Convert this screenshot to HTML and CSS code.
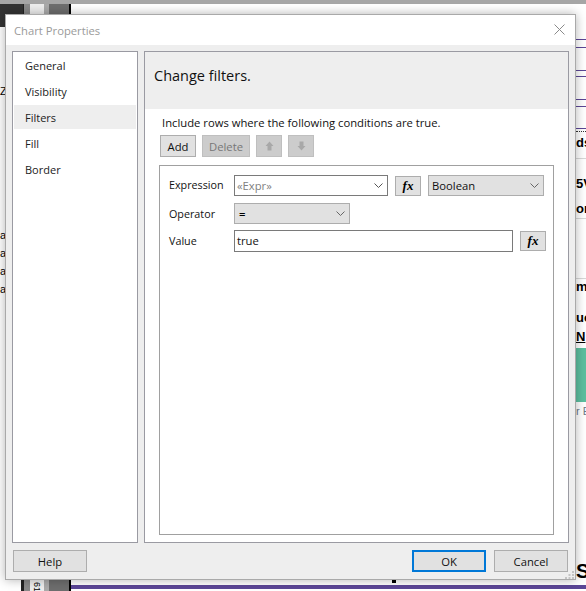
FILE: index.html
```html
<!DOCTYPE html>
<html lang="en">
<head>
<meta charset="utf-8">
<title>Chart Properties</title>
<link rel="stylesheet" href="styles.css">
</head>
<body>
<div class="backdrop">
  <div class="topbar"></div>
  <div class="tabstrip"></div>
  <div class="tab t1"></div>
  <div class="bottombar"></div>
  <div class="leftbar"><span class="vtext">61</span></div>
  <div class="speck"></div>
  <div class="ltext z">Z</div>
  <div class="ltext a1">a</div><div class="ltext a2">a</div><div class="ltext a3">a</div><div class="ltext a4">a</div>
  <div class="rule r1"></div><div class="rule r2"></div><div class="rule r3"></div><div class="rule r4"></div><div class="rule r5"></div><div class="rule r6"></div><div class="rule r7"></div>
  <div class="dots"></div>
  <div class="rule lite l1"></div><div class="rule lite l2"></div><div class="rule lite l3"></div>
  <div class="rtext x1">ds</div><div class="rtext x2">5V</div><div class="rtext x3">or</div><div class="rtext x4">m</div><div class="rtext x5">ue</div><div class="rtext x6"><u>N</u></div>
  <div class="teal"></div>
  <div class="rtext x7">r E</div>
  <div class="rtext x8">S</div>
</div>

<div class="dialog">
  <header class="titlebar">
    <span class="title">Chart Properties</span>
    <svg class="close" width="11" height="11" viewBox="0 0 11 11"><path d="M.5.5l10 10M10.500.5l-10 10" stroke="#8a8a8a" stroke-width="1" fill="none"/></svg>
  </header>
  <div class="body">
    <nav class="nav">
      <div class="nav-item">General</div>
      <div class="nav-item">Visibility</div>
      <div class="nav-item active">Filters</div>
      <div class="nav-item">Fill</div>
      <div class="nav-item">Border</div>
    </nav>
    <main class="panel">
      <div class="heading">Change filters.</div>
      <div class="content">
        <p class="intro">Include rows where the following conditions are true.</p>
        <div class="toolbar">
          <button class="btn add">Add</button>
          <button class="btn disabled del">Delete</button>
          <button class="btn disabled arrow"><svg width="9" height="10" viewBox="0 0 9 10"><path d="M4.500.5L8.500 5H6.500v4.500h-4V5H.5z" fill="#a8a8a8"/></svg></button>
          <button class="btn disabled arrow"><svg width="9" height="10" viewBox="0 0 9 10"><path d="M4.500 9.500L8.500 5H6.500V.5h-4V5H.5z" fill="#a8a8a8"/></svg></button>
        </div>
        <div class="filter">
          <div class="row row1">
            <label class="lbl">Expression</label>
            <div class="combo expr"><span class="ph">«Expr»</span><svg class="chev" width="9" height="5" viewBox="0 0 9 5"><path d="M.5.5l4 4 4-4" stroke="#555" fill="none"/></svg></div>
            <button class="fx"><i>fx</i></button>
            <div class="combo gray type"><span>Boolean</span><svg class="chev" width="9" height="5" viewBox="0 0 9 5"><path d="M.5.5l4 4 4-4" stroke="#666" fill="none"/></svg></div>
          </div>
          <div class="row row2">
            <label class="lbl">Operator</label>
            <div class="combo gray op"><span class="eq">=</span><svg class="chev" width="9" height="5" viewBox="0 0 9 5"><path d="M.5.5l4 4 4-4" stroke="#666" fill="none"/></svg></div>
          </div>
          <div class="row row3">
            <label class="lbl">Value</label>
            <div class="input">true</div>
            <button class="fx"><i>fx</i></button>
          </div>
        </div>
      </div>
    </main>
  </div>
  <footer class="footer">
    <button class="btn big">Help</button>
    <span class="spacer"></span>
    <button class="btn big ok">OK</button>
    <button class="btn big">Cancel</button>
    <svg class="grip" width="10" height="8" viewBox="0 0 10 8"><path d="M7 0h2v2H7zM3.500 3h2v2h-2zM7 3h2v2H7zM0 6h2v2H0zM3.500 6h2v2h-2zM7 6h2v2H7z" fill="#c4c4c4"/></svg>
  </footer>
</div>
</body>
</html>
```
FILE: styles.css
```css
* { box-sizing: border-box; }
html, body { margin: 0; padding: 0; }
body {
  width: 586px; height: 591px; overflow: hidden; position: relative;
  background: #fff;
  font-family: "Open Sans", "Noto Sans", "Liberation Sans", sans-serif;
  font-size: 11.25px; color: #111;
}
.backdrop { position: absolute; inset: 0; overflow: hidden; }
.topbar { position: absolute; left: 0; top: 0; width: 586px; height: 4px; background: #a6a6a6; }
.tabstrip { position: absolute; left: 21px; top: 4px; width: 50px; height: 11px; background: linear-gradient(90deg, #222 0 6%, #8a8a8a 6% 18%, #eee 18% 46%, #aaa 46% 56%, #6e6e6e 56% 96%, #000 96%); }
.tab { position: absolute; top: 4px; }
.t1 { left: 0; width: 23px; height: 23px; background: #333; }
.bottombar { position: absolute; left: 71px; top: 585px; width: 515px; height: 4px; background: #5b4696; }
.leftbar { position: absolute; left: 21px; top: 579px; width: 50px; height: 12px; overflow: hidden; background: linear-gradient(90deg, #222 0 6%, #8a8a8a 6% 18%, #eee 18% 46%, #aaa 46% 56%, #6e6e6e 56% 96%, #000 96%); }
.vtext { position: absolute; left: 11px; top: 3px; font-family: "Liberation Sans", sans-serif; font-size: 9px; line-height: 10px; color: #000; transform: rotate(90deg); }
.speck { position: absolute; left: 392px; top: 579px; width: 4px; height: 4px; background: #000; }
.ltext, .rtext { position: absolute; font-family: "Liberation Sans", sans-serif; color: #000; line-height: 12px; white-space: nowrap; }
.ltext { left: 0; font-size: 11px; }
.z { top: 85px; } .a1 { top: 229px; } .a2 { top: 247px; } .a3 { top: 265px; } .a4 { top: 283px; }
.rule { position: absolute; left: 576px; width: 10px; height: 1px; background: #5b4696; }
.r1 { top: 39px; } .r2 { top: 47px; } .r3 { top: 70px; } .r4 { top: 76px; } .r5 { top: 99px; } .r6 { top: 106px; } .r7 { top: 128px; }
.lite { background: #d8d8d8; }
.l1 { top: 158px; } .l2 { top: 218px; } .l3 { top: 278px; }
.dots { position: absolute; left: 576px; top: 131px; width: 10px; height: 1px; border-top: 1px dotted #333; }
.rtext { left: 576px; font-size: 13px; font-weight: bold; line-height: 14px; }
.x1 { top: 136px; } .x2 { top: 177px; } .x3 { top: 202px; } .x4 { top: 280px; } .x5 { top: 311px; } .x6 { top: 330px; }
.teal { position: absolute; left: 575px; top: 348px; width: 11px; height: 54px; background: #5cbf9f; }
.x7 { top: 404px; font-weight: normal; font-size: 11px; color: #6a7a8a; }
.x8 { top: 560px; font-size: 20px; line-height: 22px; }

.dialog {
  position: absolute; left: 5px; top: 14px; width: 571px; height: 566px;
  display: flex; flex-direction: column;
  background: #eeeeee; border: 1px solid #a9a9a9;
  box-shadow: 0 0 10px rgba(0,0,0,.3);
}
.titlebar { height: 30px; flex: none; background: #fff; display: flex; align-items: center; justify-content: space-between; padding: 0 10px 0 8px; }
.title { color: #9a9a9a; }
.close { margin-bottom: 2px; }
.body { flex: 1; min-height: 0; display: flex; gap: 6px; padding: 6px 6px 0 6px; }
.nav { width: 126px; background: #fff; border: 1px solid #9a9aa2; padding: 1px; display: flex; flex-direction: column; }
.nav-item { height: 26px; line-height: 26px; padding-left: 11px; color: #222; font-size: 11px; }
.nav-item.active { height: 24px; margin-bottom: 2px; background: #eeeeee; }
.panel { flex: 1; min-width: 0; background: #fff; border: 1px solid #9a9aa2; display: flex; flex-direction: column; }
.heading { height: 57px; flex: none; background: #eeeeee; padding-left: 9px; line-height: 48px; font-size: 14.5px; color: #111; }
.content { flex: 1; min-height: 0; display: flex; flex-direction: column; padding: 0 14px 7px 14px; }
.intro { margin: 0 0 0 3px; height: 26px; line-height: 27px; }
.toolbar { display: flex; gap: 6px; height: 23px; flex: none; margin-left: 1px; }
button { font: inherit; color: #111; margin: 0; padding: 0; background: #e1e1e1; border: 1px solid #adadad; }
.btn { height: 22px; }
.add { width: 36px; }
.del { width: 48px; }
.arrow { width: 26px; display: flex; align-items: center; justify-content: center; }
.disabled { background: #cccccc; border-color: #bfbfbf; color: #777; }
.filter { flex: 1; margin-top: 7px; border: 1px solid #a0a0a0; padding: 9px 9px 0 9px; display: flex; flex-direction: column; }
.row { display: flex; align-items: flex-start; }
.row > * { flex: none; }
.row1 { height: 21px; }
.row2 { height: 21px; margin-top: 7px; }
.row3 { height: 22px; margin-top: 6px; }
.lbl { width: 65px; color: #111; font-size: 10.75px; line-height: 20px; }
.row2 .lbl { line-height: 22px; }
.row3 .lbl { line-height: 22px; }
.combo { height: 21px; display: flex; align-items: center; justify-content: space-between; padding: 0 4px 0 2px; border: 1px solid #7a7a7a; background: #fff; }
.combo.gray { background: #e1e1e1; border-color: #adadad; }
.expr { width: 154px; }
.ph { color: #808080; }
.eq { color: #000; font-weight: 600; padding-left: 2px; }
.type { width: 116px; margin-left: 7px; padding-left: 3px; }
.op { width: 116px; }
.fx { width: 26px; height: 20px; margin: 1px 0 0 7px; font-family: "Liberation Serif", serif; font-weight: bold; font-size: 13px; line-height: 16px; color: #000; }
.input { width: 279px; height: 22px; border: 1px solid #7a7a7a; background: #fff; padding-left: 2px; line-height: 19px; }
.footer { flex: none; height: 36px; display: flex; align-items: flex-start; padding: 7px 7px 0 7px; position: relative; gap: 8px; }
.spacer { flex: 1; }
.big { width: 74px; height: 22px; }
.ok { border: 2px solid #0078d7; }
.grip { position: absolute; right: 0; bottom: 0; }
```
